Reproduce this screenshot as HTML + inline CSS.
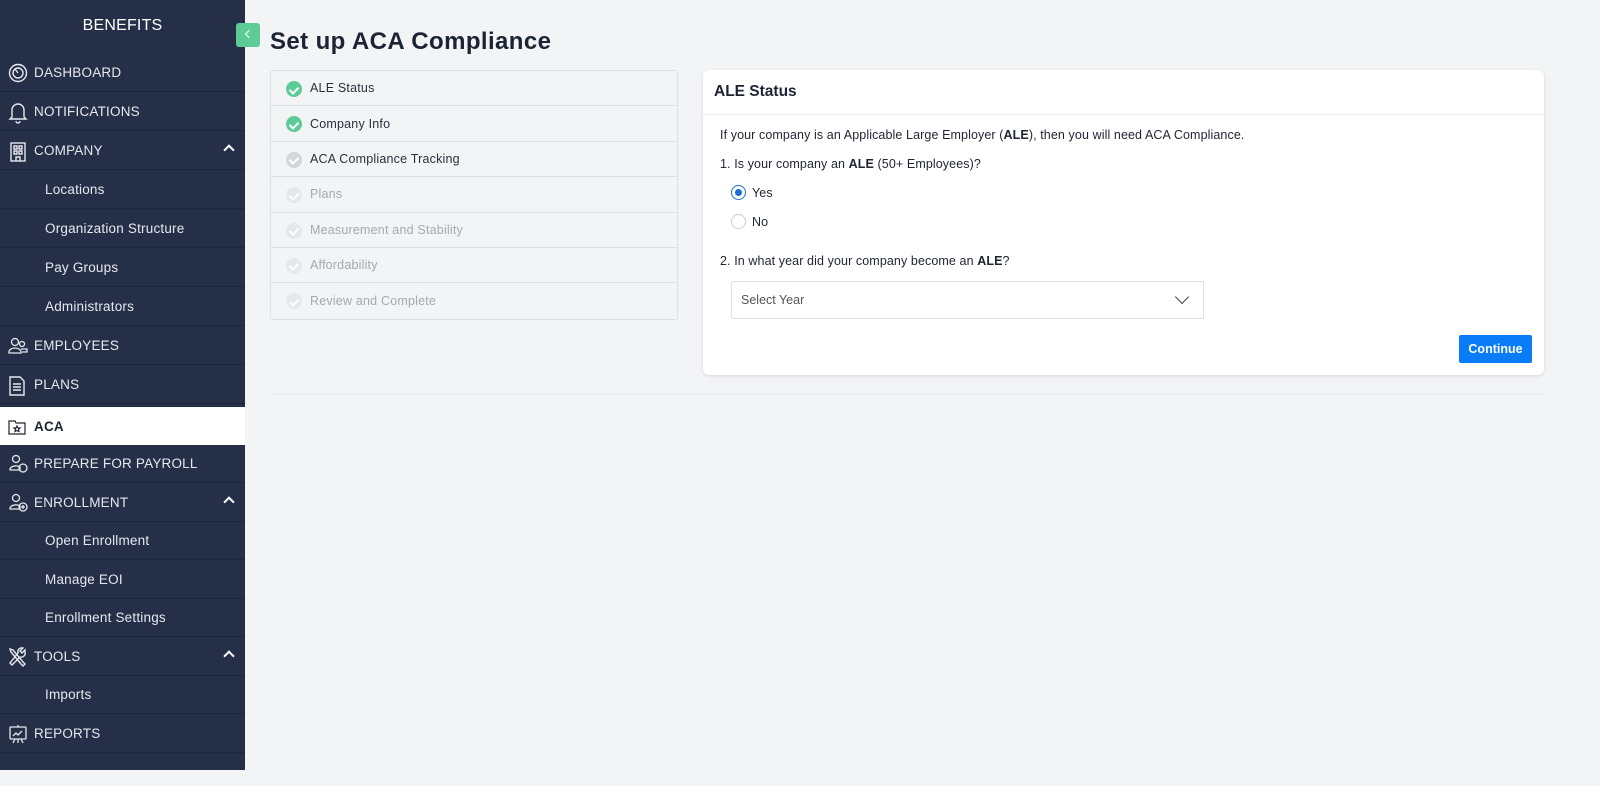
<!DOCTYPE html>
<html><head><meta charset="utf-8"><style>
*{box-sizing:border-box;margin:0;padding:0}
body{width:1600px;height:786px;background:#f3f4f6;font-family:"Liberation Sans",sans-serif;position:relative;overflow:hidden;color:#1f2433}
.sb{position:absolute;left:0;top:0;width:245px;height:770px;background:#262f48;color:#e6e8ee}
.sb h1{position:absolute;top:17px;left:0;width:245px;text-align:center;font-size:16px;font-weight:normal;color:#fff;letter-spacing:.2px}
.row{position:absolute;left:0;width:245px;height:38px;border-bottom:1px solid #1e2639;font-size:13.5px;display:flex;align-items:center;letter-spacing:.2px}
.row.top{padding-left:34px}
.row.sub{padding-left:45px;font-size:13.5px}
.row svg{position:absolute;left:8px;top:9px}
.row .car{position:absolute;right:12px;top:14px;width:8px;height:8px;border-left:2.5px solid #fff;border-top:2.5px solid #fff;transform:rotate(45deg)}
.row.act{background:#fff;color:#1f2433;font-weight:bold;border:none}
.tab{position:absolute;left:236px;top:23px;width:24px;height:24px;background:#5ccb95;border-radius:3px}
.tab:after{content:"";position:absolute;left:10px;top:8px;width:5px;height:5px;border-left:1.5px solid #fff;border-bottom:1.5px solid #fff;transform:rotate(45deg)}
.title{position:absolute;left:270px;top:28px;font-size:24px;font-weight:bold;color:#1c2333;letter-spacing:.4px}
.steps{position:absolute;left:270px;top:70px;width:408px;border:1px solid #dcdfe4;border-radius:3px}
.st{height:35.4px;border-bottom:1px solid #dcdfe4;display:flex;align-items:center;padding-left:39px;font-size:12.5px;position:relative;color:#2a2f3d;letter-spacing:.2px}
.st:last-child{border-bottom:none}
.st i{position:absolute;left:15px;top:10px;width:16px;height:16px;border-radius:50%;background:#5ccb95}
.st i:after{content:"";position:absolute;left:5px;top:3.5px;width:4px;height:7px;border-right:2px solid #fff;border-bottom:2px solid #fff;transform:rotate(45deg)}
.st.g i{background:#d4d6da}
.st.l i{background:#e6e7ea}
.st.l{color:#a4a8b0}
.card{position:absolute;left:703px;top:70px;width:841px;height:305px;background:#fff;border-radius:6px;box-shadow:0 1px 3px rgba(0,0,0,.12)}
.ch{height:45px;border-bottom:1px solid #eceef1;padding:13px 0 0 11px;font-size:15.5px;font-weight:bold;color:#1c2333}
.t{position:absolute;left:17px;font-size:12.5px;color:#1f2433;letter-spacing:.1px}
.rad{position:absolute;left:28px;width:15px;height:15px;border-radius:50%;border:1px solid #c9ccd2}
.rad.on{border:1.5px solid #1a6fd1}
.rad.on:after{content:"";position:absolute;left:2.5px;top:2.5px;width:7px;height:7px;border-radius:50%;background:#1a6fd1}
.sel{position:absolute;left:28px;top:211px;width:473px;height:38px;border:1px solid #d9e2e6;border-radius:2px;font-size:12.5px;color:#555;padding:11px 0 0 9px}
.sel:after{content:"";position:absolute;right:16px;top:10px;width:9px;height:9px;border-right:1px solid #444;border-bottom:1px solid #444;transform:rotate(45deg)}
.btn{position:absolute;left:756px;top:265px;width:73px;height:28px;background:#0a7cf8;border-radius:2px;color:#fff;font-size:12.5px;font-weight:bold;text-align:center;line-height:28px}
.hr{position:absolute;left:270px;top:394px;width:1274px;height:1px;background:#e8eaed}
</style></head><body>
<div class="sb">
<h1>BENEFITS</h1>
<div class="row top" style="top:54px"><svg width="20" height="20" viewBox="0 0 20 20" fill="none" stroke="#e6e8ee" stroke-width="1.4"><circle cx="10" cy="10" r="8.5"/><circle cx="10" cy="10" r="5"/><path d="M10 10L7 6"/></svg>DASHBOARD</div>
<div class="row top" style="top:93px"><svg width="20" height="22" viewBox="0 0 20 22" fill="none" stroke="#e6e8ee" stroke-width="1.4"><path d="M4 15V8a6 6 0 0 1 12 0v7l2 2H2z"/><path d="M8 19a2 2 0 0 0 4 0"/></svg>NOTIFICATIONS</div>
<div class="row top" style="top:132px"><svg width="20" height="22" viewBox="0 0 20 22" fill="none" stroke="#e6e8ee" stroke-width="1.4"><rect x="3" y="2" width="14" height="18"/><path d="M6 5h3v3H6zM11 5h3v3h-3zM6 10h3v3H6zM11 10h3v3h-3zM8 20v-4h4v4"/></svg>COMPANY<span class="car"></span></div>
<div class="row sub" style="top:171px">Locations</div>
<div class="row sub" style="top:210px">Organization Structure</div>
<div class="row sub" style="top:249px">Pay Groups</div>
<div class="row sub" style="top:288px">Administrators</div>
<div class="row top" style="top:327px"><svg width="20" height="20" viewBox="0 0 20 20" fill="none" stroke="#e6e8ee" stroke-width="1.3"><circle cx="7" cy="6" r="3.5"/><path d="M1 16a6 4 0 0 1 12 0v1H1z"/><circle cx="14" cy="8" r="2.5"/><path d="M13 13h6v3h-5"/></svg>EMPLOYEES</div>
<div class="row top" style="top:366px"><svg width="18" height="22" viewBox="0 0 18 22" fill="none" stroke="#e6e8ee" stroke-width="1.4"><path d="M2 2h10l4 4v14H2z"/><path d="M5 9h8M5 12h8M5 15h8"/></svg>PLANS</div>
<div class="row top act" style="top:407px"><svg width="18" height="18" viewBox="0 0 18 18" fill="none" stroke="#1f2433" stroke-width="1.2" style="top:11px"><path d="M1 3h6l1 2h9v11H1z"/><path d="M9 8l1 2h2l-1.5 1.5.5 2-2-1-2 1 .5-2L6 10h2z"/></svg>ACA</div>
<div class="row top" style="top:445px"><svg width="20" height="20" viewBox="0 0 20 20" fill="none" stroke="#e6e8ee" stroke-width="1.3"><circle cx="8" cy="5" r="3.5"/><path d="M2 15a6 4 0 0 1 10-2v3H2z"/><circle cx="15" cy="14" r="4"/></svg>PREPARE FOR PAYROLL</div>
<div class="row top" style="top:484px"><svg width="20" height="20" viewBox="0 0 20 20" fill="none" stroke="#e6e8ee" stroke-width="1.3"><circle cx="8" cy="5" r="3.5"/><path d="M2 15a6 4 0 0 1 10-2v3H2z"/><circle cx="15" cy="14" r="4"/><path d="M15 12v4M13 14h4"/></svg>ENROLLMENT<span class="car"></span></div>
<div class="row sub" style="top:522px">Open Enrollment</div>
<div class="row sub" style="top:561px">Manage EOI</div>
<div class="row sub" style="top:599px">Enrollment Settings</div>
<div class="row top" style="top:638px"><svg width="20" height="22" viewBox="0 0 20 22" fill="none" stroke="#e6e8ee" stroke-width="1.4"><path d="M2 2l3 1 10 12 2 2-2 2-2-2L3 5z"/><path d="M17 3l-3 3-2-2 3-3a4 4 0 0 0-5 5L2 16l2 2 8-8a4 4 0 0 0 5-5z"/></svg>TOOLS<span class="car"></span></div>
<div class="row sub" style="top:676px">Imports</div>
<div class="row top" style="top:715px"><svg width="20" height="22" viewBox="0 0 20 22" fill="none" stroke="#e6e8ee" stroke-width="1.3"><rect x="2" y="3" width="16" height="12" rx="1"/><path d="M5 12l3-3 2 2 4-4M7 15l-2 4M13 15l2 4M10 15v4M10 1v2"/></svg>REPORTS</div>
</div>
<div class="tab"></div>
<div class="title">Set up ACA Compliance</div>
<div class="steps">
<div class="st"><i></i>ALE Status</div>
<div class="st"><i></i>Company Info</div>
<div class="st g"><i></i>ACA Compliance Tracking</div>
<div class="st l"><i></i>Plans</div>
<div class="st l"><i></i>Measurement and Stability</div>
<div class="st l"><i></i>Affordability</div>
<div class="st l"><i></i>Review and Complete</div>
</div>
<div class="card">
<div class="ch">ALE Status</div>
<div class="t" style="top:58px">If your company is an Applicable Large Employer (<b>ALE</b>), then you will need ACA Compliance.</div>
<div class="t" style="top:87px">1. Is your company an <b>ALE</b> (50+ Employees)?</div>
<div class="rad on" style="top:115px"></div><div class="t" style="left:49px;top:116px">Yes</div>
<div class="rad" style="top:144px"></div><div class="t" style="left:49px;top:145px">No</div>
<div class="t" style="top:184px">2. In what year did your company become an <b>ALE</b>?</div>
<div class="sel">Select Year</div>
<div class="btn">Continue</div>
</div>
<div class="hr"></div>
</body></html>
